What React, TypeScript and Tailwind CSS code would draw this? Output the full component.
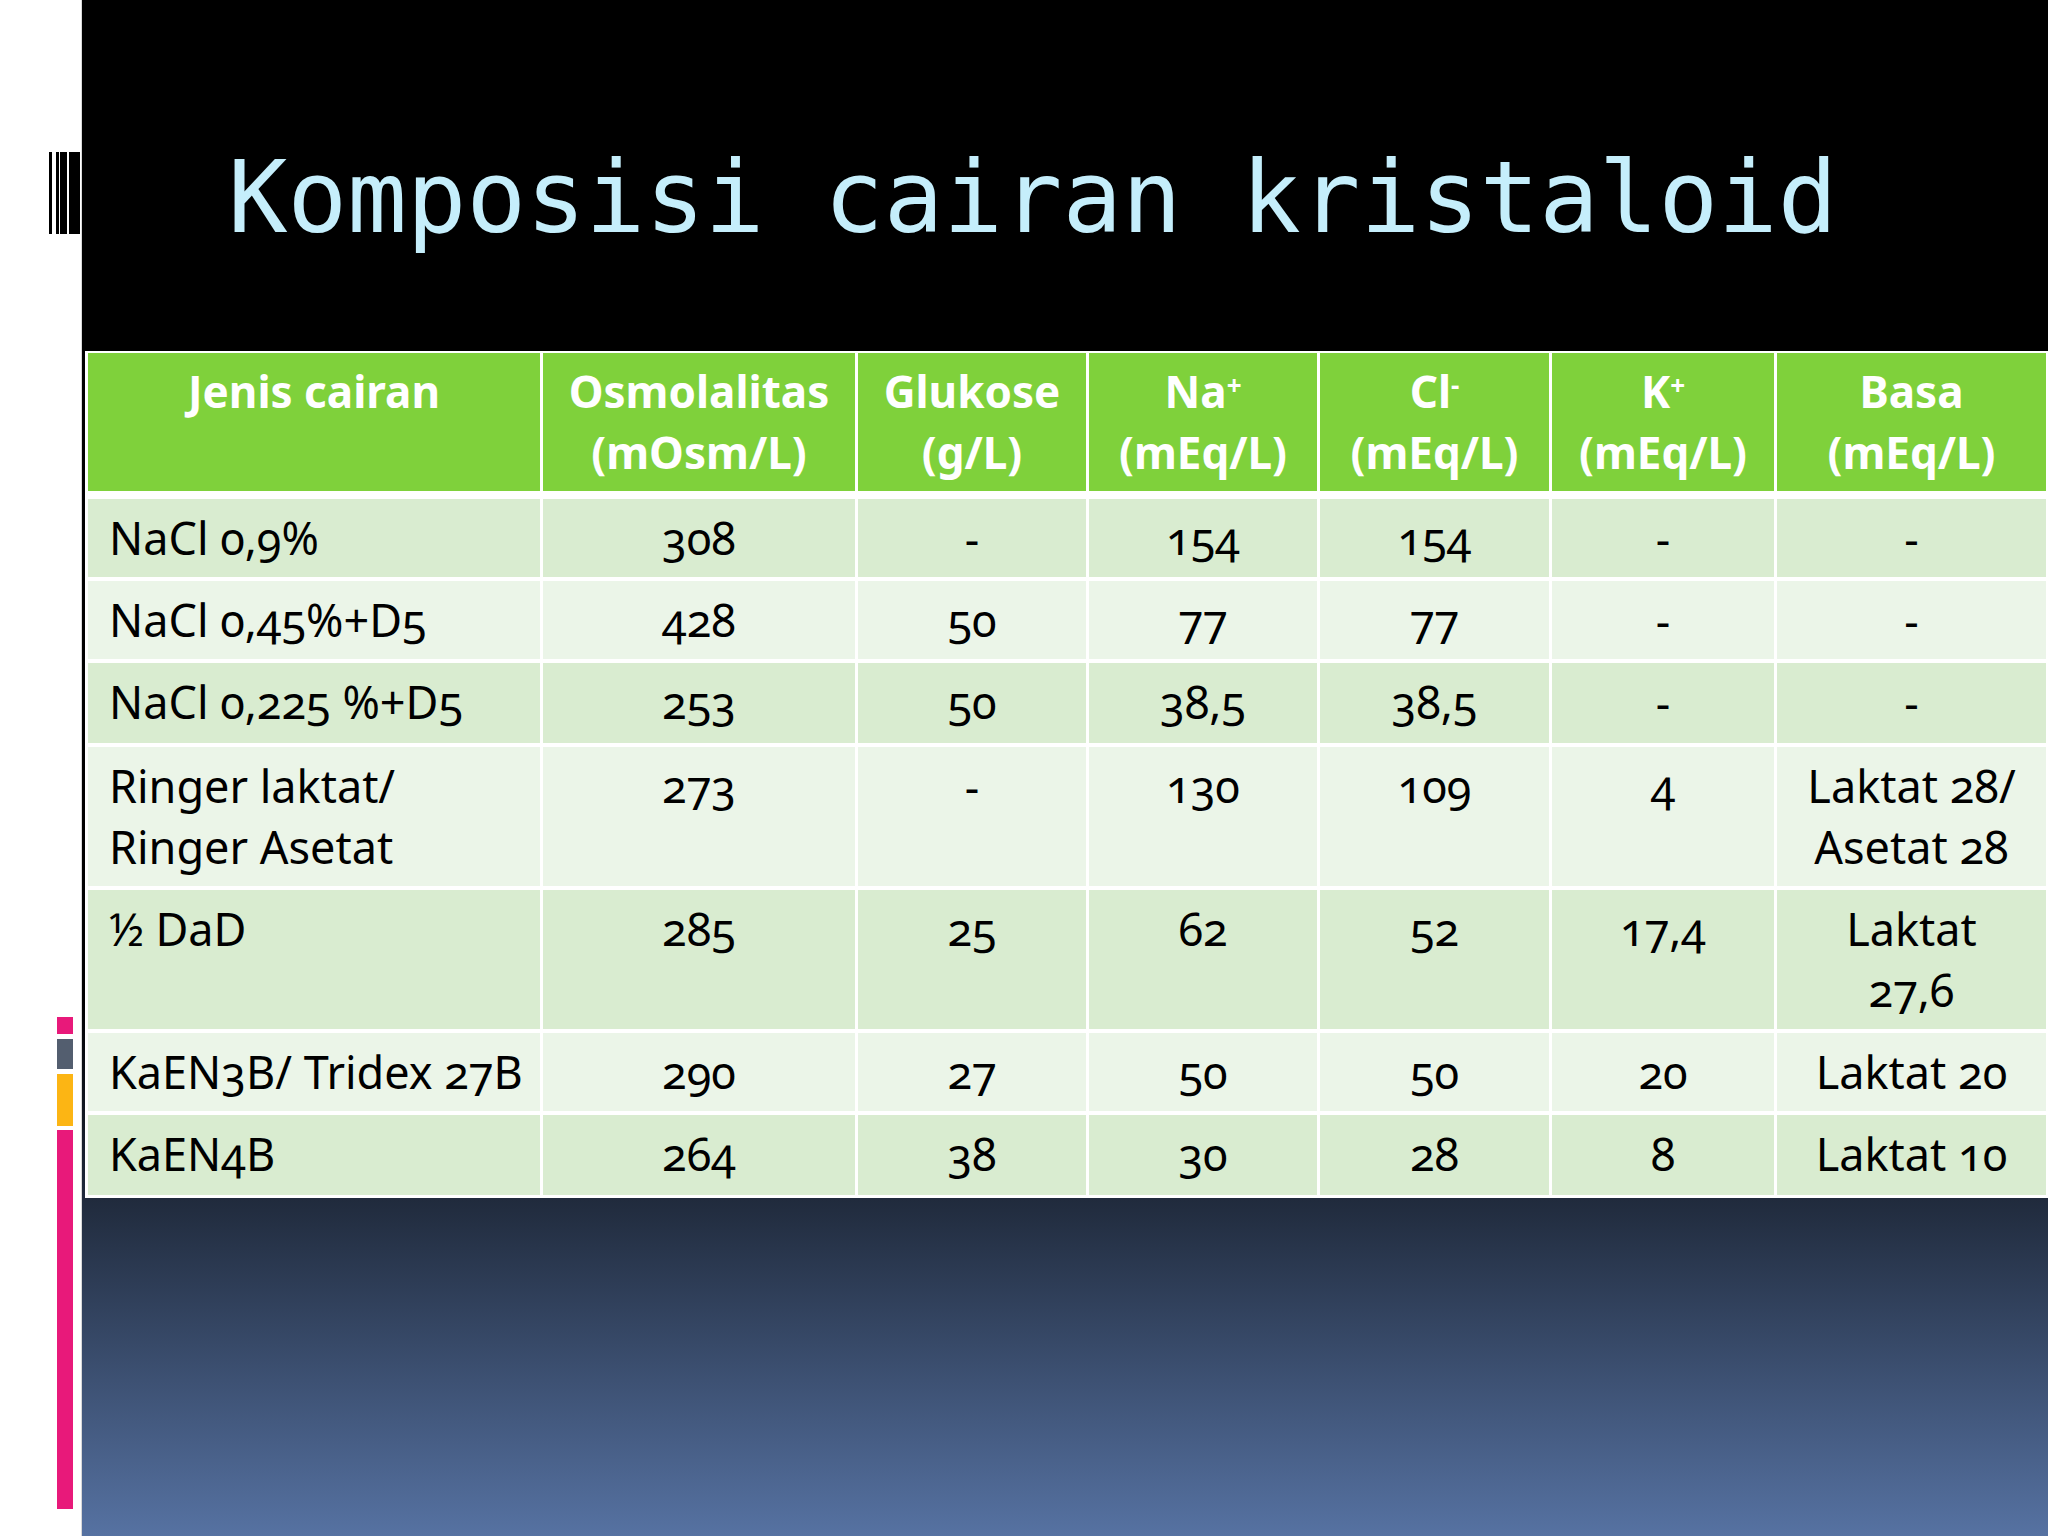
import type { ReactNode } from "react";

const cellFont = { fontFamily: '"Noto Sans", "Open Sans", sans-serif' };

const headers: ReactNode[][] = [
  ["Jenis cairan"],
  ["Osmolalitas", "(mOsm/L)"],
  ["Glukose", "(g/L)"],
  [<>Na<sup className="text-[26px]">+</sup></>, "(mEq/L)"],
  [<>Cl<sup className="text-[26px]">-</sup></>, "(mEq/L)"],
  [<>K<sup className="text-[26px]">+</sup></>, "(mEq/L)"],
  ["Basa", "(mEq/L)"],
];

const rows: { h: string; bg: string; cells: string[][] }[] = [
  { h: "h-[78px]", bg: "bg-[#d9ecd0]", cells: [["NaCl 0,9%"], ["308"], ["-"], ["154"], ["154"], ["-"], ["-"]] },
  { h: "h-[78px]", bg: "bg-[#ebf5e8]", cells: [["NaCl 0,45%+D5"], ["428"], ["50"], ["77"], ["77"], ["-"], ["-"]] },
  { h: "h-[80px]", bg: "bg-[#d9ecd0]", cells: [["NaCl 0,225 %+D5"], ["253"], ["50"], ["38,5"], ["38,5"], ["-"], ["-"]] },
  {
    h: "h-[139px]",
    bg: "bg-[#ebf5e8]",
    cells: [["Ringer laktat/", "Ringer Asetat"], ["273"], ["-"], ["130"], ["109"], ["4"], ["Laktat 28/", "Asetat 28"]],
  },
  { h: "h-[139px]", bg: "bg-[#d9ecd0]", cells: [["½ DaD"], ["285"], ["25"], ["62"], ["52"], ["17,4"], ["Laktat", "27,6"]] },
  { h: "h-[78px]", bg: "bg-[#ebf5e8]", cells: [["KaEN3B/ Tridex 27B"], ["290"], ["27"], ["50"], ["50"], ["20"], ["Laktat 20"]] },
  { h: "h-[80px]", bg: "bg-[#d9ecd0]", cells: [["KaEN4B"], ["264"], ["38"], ["30"], ["28"], ["8"], ["Laktat 10"]] },
];

const cols = "grid grid-cols-[452px_312px_228px_228px_229px_222px_269px] gap-x-[3px]";

function SideStrip() {
  return (
    <div className="w-[82px] shrink-0 bg-white border-r border-[#d8d8d8] flex flex-col">
      <div className="mt-[152px] ml-[49px] flex h-[82px]">
        <div className="w-[3px] bg-black" />
        <div className="w-[3px] ml-[4px] bg-black" />
        <div className="w-[7px] ml-[1px] bg-black" />
        <div className="w-[11px] ml-[2px] bg-black" />
      </div>
      <div className="mt-[783px] ml-[57px] w-[16px] flex flex-col">
        <div className="h-[17px] bg-[#e8197a]" />
        <div className="h-[30px] mt-[5px] bg-[#535e6f]" />
        <div className="h-[52px] mt-[5px] bg-[#fcb514]" />
        <div className="h-[379px] mt-[4px] bg-[#e8197a]" />
      </div>
    </div>
  );
}

export default function App() {
  return (
    <div className="w-[2048px] h-[1536px] flex overflow-hidden bg-white">
      <SideStrip />
      <div className="flex-1 flex flex-col bg-[linear-gradient(to_bottom,#000_0%,#000_65%,#5672a2_100%)]">
        <div className="h-[351px] pt-[148px] pl-[146px]">
          <h1
            className="text-[99px] leading-none font-normal text-[#c5eefb] whitespace-pre"
            style={{ fontFamily: '"DejaVu Sans Mono", "Liberation Mono", monospace' }}
          >
            Komposisi cairan kristaloid
          </h1>
        </div>

        <div className="ml-[3px] bg-white pt-[2px] pl-[3px] pr-[2px] pb-[3px] oldstyle-nums" style={cellFont}>
          <div className={cols}>
            {headers.map((lines, i) => (
              <div
                key={i}
                className="h-[138px] bg-[#7fd13b] pt-[8px] text-center text-white font-bold text-[44px] leading-[61px] whitespace-nowrap"
              >
                {lines.map((l, j) => (
                  <div key={j}>{l}</div>
                ))}
              </div>
            ))}
          </div>

          <div className={`${cols} mt-[8px] gap-y-[4px]`}>
            {rows.map((row, r) =>
              row.cells.map((lines, c) => (
                <div
                  key={`${r}-${c}`}
                  className={`${row.h} ${row.bg} pt-[8px] text-[45px] leading-[61px] text-black whitespace-nowrap ${
                    c === 0 ? "pl-[21px] text-left" : "text-center"
                  }`}
                >
                  {lines.map((l, j) => (
                    <div key={j}>{l}</div>
                  ))}
                </div>
              ))
            )}
          </div>
        </div>
      </div>
    </div>
  );
}
